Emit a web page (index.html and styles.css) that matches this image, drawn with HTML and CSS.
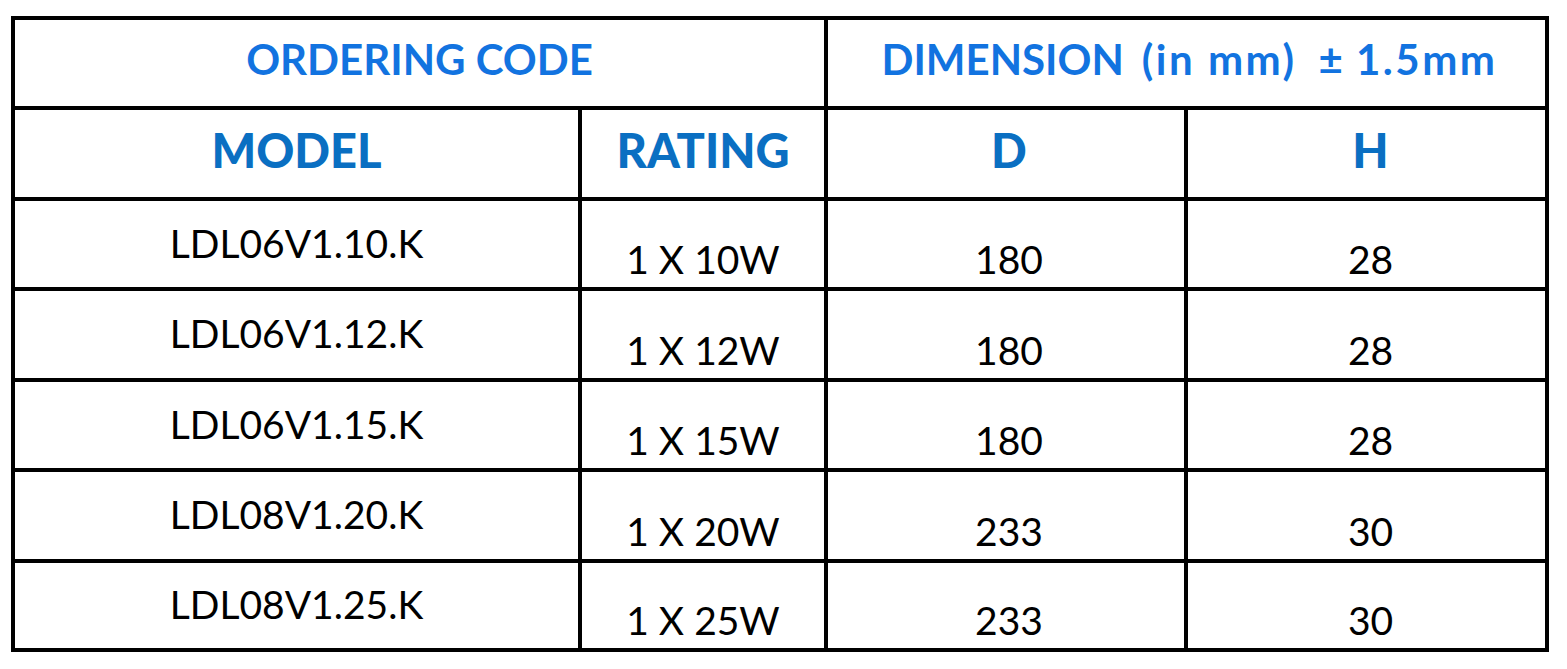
FILE: index.html
```html
<!DOCTYPE html>
<html>
<head>
<meta charset="utf-8">
<link rel="stylesheet" href="styles.css">
</head>
<body>
<div class="sheet">
  <div class="cell head span2">ORDERING CODE</div>
  <div class="cell head span2 dim"><span>DIMENSION<span class="g1">(in mm)</span><span class="g2">±</span><span class="g3">1.5mm</span></span></div>
  <div class="cell sub">MODEL</div>
  <div class="cell sub">RATING</div>
  <div class="cell sub c3">D</div>
  <div class="cell sub c4">H</div>

  <div class="cell model">LDL06V1.10.K</div>
  <div class="cell val">1 X 10W</div>
  <div class="cell val c3">180</div>
  <div class="cell val c4">28</div>

  <div class="cell model">LDL06V1.12.K</div>
  <div class="cell val">1 X 12W</div>
  <div class="cell val c3">180</div>
  <div class="cell val c4">28</div>

  <div class="cell model">LDL06V1.15.K</div>
  <div class="cell val">1 X 15W</div>
  <div class="cell val c3">180</div>
  <div class="cell val c4">28</div>

  <div class="cell model">LDL08V1.20.K</div>
  <div class="cell val">1 X 20W</div>
  <div class="cell val c3">233</div>
  <div class="cell val c4">30</div>

  <div class="cell model">LDL08V1.25.K</div>
  <div class="cell val">1 X 25W</div>
  <div class="cell val c3">233</div>
  <div class="cell val c4">30</div>
</div>
</body>
</html>
```

FILE: styles.css
```css
html, body {
  margin: 0;
  padding: 0;
  background: #ffffff;
}

.sheet {
  display: grid;
  grid-template-columns: 563px 242px 356px 357px;
  grid-template-rows: 86px 87px 86px 87px 86px 87px 85px;
  gap: 4px;
  padding: 4px;
  background: #000000;
  width: max-content;
  margin: 16px 0 0 11px;
}

.cell {
  background: #ffffff;
  display: flex;
  justify-content: center;
  box-sizing: border-box;
  font-family: Lato, "Open Sans", sans-serif;
  line-height: 1;
  white-space: nowrap;
}

.span2 {
  grid-column: span 2;
}

.head {
  align-items: center;
  padding-bottom: 8px;
  font-size: 42px;
  font-weight: 700;
  color: #1273e0;
}

.dim {
  padding-left: 6px;
}

.g1 {
  margin-left: 18px;
  letter-spacing: 2.5px;
}

.g2 {
  margin-left: 22px;
}

.g3 {
  margin-left: 13px;
  letter-spacing: 2.5px;
}

.sub {
  align-items: center;
  padding-bottom: 7px;
  font-size: 47px;
  font-weight: 900;
  color: #0a6fc2;
}

.model {
  align-items: center;
  padding-bottom: 2px;
  font-size: 39px;
  color: #000000;
}

.val {
  align-items: flex-end;
  padding-bottom: 8px;
  font-size: 39px;
  color: #000000;
}

.c3 {
  padding-left: 6px;
}

.c4 {
  padding-left: 8px;
}
```
